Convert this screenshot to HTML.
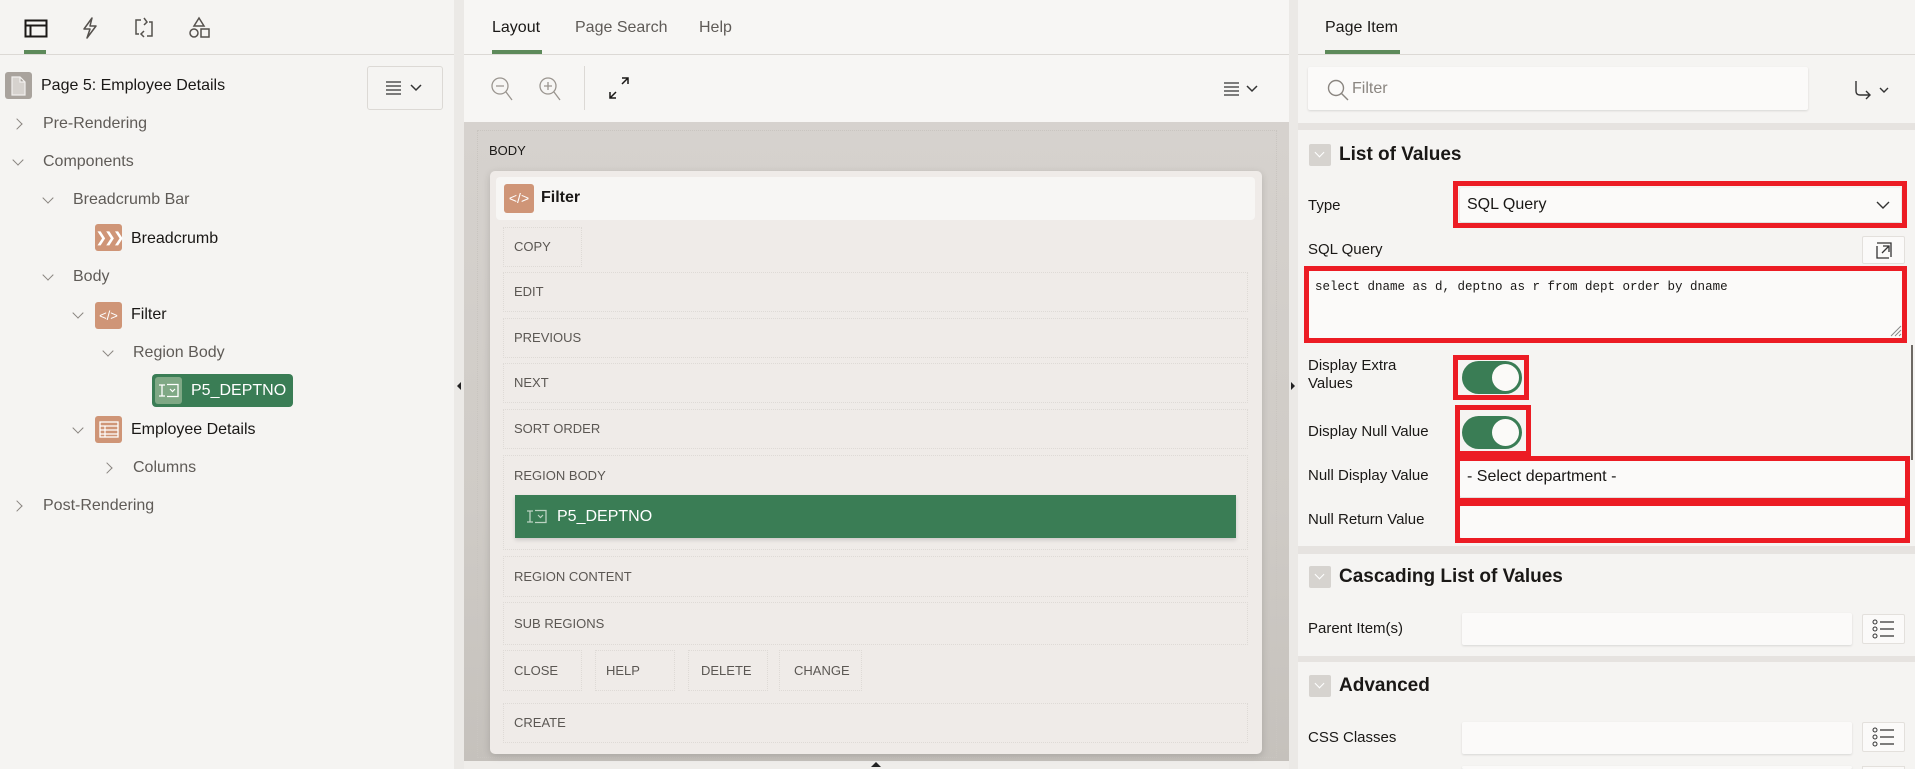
<!DOCTYPE html>
<html style="width:1915px;height:769px;overflow:hidden"><head><meta charset="utf-8"><style>
*{box-sizing:border-box;margin:0;padding:0}
body{width:1915px;height:769px;overflow:hidden;background:#ebe9e6;font-family:"Liberation Sans",sans-serif;position:relative;color:#1a1816}
.a{position:absolute}
.pane{position:absolute;top:0;height:769px;background:#f5f4f2}
.tabline{position:absolute;left:0;right:0;top:54px;height:1px;background:#dcd9d5}
.tree{position:absolute;font-size:16px;color:#5f5b57;white-space:nowrap;line-height:20px}
.dk{color:#1a1816}
.chev{position:absolute;width:8px;height:8px;border-right:1.5px solid #8a8580;border-bottom:1.5px solid #8a8580}
.cd{transform:rotate(45deg)}
.cr{transform:rotate(-45deg)}
.ico{position:absolute;width:27px;height:27px;background:#cf9577;border-radius:3px;color:#fff;font-size:13px;text-align:center;line-height:27px}
.row{position:absolute;left:503px;width:745px;border:1px dotted #dedad6;font-size:13px;color:#5b5753;padding-left:10px}
.lbl{position:absolute;left:1308px;font-size:15px;color:#1a1816;line-height:18px}
.red{position:absolute;border:5px solid #ec1c24}
.inp{position:absolute;background:#fbfaf9;border-radius:2px;box-shadow:0 1px 2px rgba(0,0,0,.12)}
.tog{position:absolute;width:60px;height:33px;border-radius:17px;background:#3a7d55}
.tog:after{content:"";position:absolute;right:3px;top:3px;width:27px;height:27px;border-radius:14px;background:#fbfaf8}
.hdr{position:absolute;left:1339px;font-size:19px;font-weight:bold;color:#1a1816}
.tb{position:absolute;left:1309px;width:22px;height:22px;background:#d6d3cf;border-radius:2px}
.tb:after{content:"";position:absolute;left:7px;top:5px;width:6px;height:6px;border-right:1.5px solid #fff;border-bottom:1.5px solid #fff;transform:rotate(45deg)}
.band{position:absolute;left:1298px;width:617px;background:#e6e3e0}
.btn{position:absolute;width:43px;height:30px;background:#fbfaf9;border:1px solid #e3e0dc;border-radius:2px}
</style></head><body>

<!-- LEFT PANE -->
<div class="pane" style="left:0;width:454px">
  <div class="tabline"></div>
  <div class="a" style="left:24px;top:50px;width:22px;height:4px;background:#5d8a5a"></div>
  <svg class="a" style="left:24px;top:18px" width="24" height="22" viewBox="0 0 24 22"><rect x="1.5" y="2.5" width="21" height="16" fill="none" stroke="#1a1816" stroke-width="2"/><line x1="1.5" y1="7.5" x2="22.5" y2="7.5" stroke="#1a1816" stroke-width="2"/><line x1="6.5" y1="7.5" x2="6.5" y2="18.5" stroke="#1a1816" stroke-width="2"/></svg>
  <svg class="a" style="left:80px;top:16px" width="20" height="24" viewBox="0 0 20 24"><path d="M12 2 L4 13 H10 L7 22 L16 10 H10 Z" fill="none" stroke="#55514d" stroke-width="1.5" stroke-linejoin="round"/></svg>
  <svg class="a" style="left:132px;top:17px" width="24" height="22" viewBox="0 0 24 22"><path d="M9 3 H4 V17 H7 M15 19 H20 V5 H17 M12 1 L15 5 L12 8 M12 14 L9 17 L12 20" fill="none" stroke="#55514d" stroke-width="1.5"/></svg>
  <svg class="a" style="left:187px;top:16px" width="24" height="24" viewBox="0 0 24 24"><path d="M12 2 L17 10 H7 Z" fill="none" stroke="#55514d" stroke-width="1.5"/><circle cx="7" cy="17" r="4" fill="none" stroke="#55514d" stroke-width="1.5"/><rect x="14" y="13" width="8" height="8" fill="none" stroke="#55514d" stroke-width="1.5"/></svg>

  <div class="a" style="left:5px;top:72px;width:27px;height:27px;background:#a9a39d;border-radius:3px"></div>
  <svg class="a" style="left:10px;top:76px" width="17" height="20" viewBox="0 0 17 20"><path d="M2 1 H10 L15 6 V19 H2 Z M10 1 V6 H15" fill="#d6d2ce" stroke="#f2f0ee" stroke-width="1.2"/></svg>
  <div class="tree dk" style="left:41px;top:76px">Page 5: Employee Details</div>
  <div class="a" style="left:367px;top:66px;width:76px;height:44px;border:1px solid #dcd9d5;border-radius:3px;background:#f5f4f2"></div>
  <svg class="a" style="left:385px;top:80px" width="40" height="16" viewBox="0 0 40 16"><path d="M1 2H16M1 6H16M1 10H16M1 14H16" stroke="#333" stroke-width="1.3"/><path d="M26 5 L31 10 L36 5" fill="none" stroke="#333" stroke-width="1.5"/></svg>

  <div class="chev cr" style="left:13px;top:120px"></div><div class="tree" style="left:43px;top:114px">Pre-Rendering</div>
  <div class="chev cd" style="left:14px;top:156px"></div><div class="tree" style="left:43px;top:152px">Components</div>
  <div class="chev cd" style="left:44px;top:194px"></div><div class="tree" style="left:73px;top:190px">Breadcrumb Bar</div>
  <div class="ico" style="left:95px;top:224px;font-size:14px;letter-spacing:-3px">❯❯❯</div><div class="tree dk" style="left:131px;top:229px">Breadcrumb</div>
  <div class="chev cd" style="left:44px;top:271px"></div><div class="tree" style="left:73px;top:267px">Body</div>
  <div class="chev cd" style="left:74px;top:309px"></div><div class="ico" style="left:95px;top:302px">&lt;/&gt;</div><div class="tree dk" style="left:131px;top:305px">Filter</div>
  <div class="chev cd" style="left:104px;top:347px"></div><div class="tree" style="left:133px;top:343px">Region Body</div>
  <div class="a" style="left:152px;top:374px;width:141px;height:33px;background:#3a7d55;border-radius:4px"></div>
  <div class="a" style="left:155px;top:377px;width:27px;height:27px;background:#7fa885;border-radius:3px"></div>
  <svg class="a" style="left:158px;top:383px" width="22" height="15" viewBox="0 0 22 15"><path d="M1 2H7M1 13H7M4 2V13M9 1.5H20V13.5H9" fill="none" stroke="#fff" stroke-width="1.3"/><path d="M12 6L14.5 8.5L17 6" fill="none" stroke="#fff" stroke-width="1.2"/></svg>
  <div class="tree" style="left:191px;top:381px;color:#fff">P5_DEPTNO</div>
  <div class="chev cd" style="left:74px;top:424px"></div>
  <div class="ico" style="left:95px;top:416px"></div>
  <svg class="a" style="left:99px;top:421px" width="20" height="17" viewBox="0 0 20 17"><rect x="1" y="1" width="18" height="15" fill="none" stroke="#fff" stroke-width="1.3"/><path d="M1 5H19M1 9H19M1 13H19M6 5V16" stroke="#fff" stroke-width="1.2"/></svg>
  <div class="tree dk" style="left:131px;top:420px">Employee Details</div>
  <div class="chev cr" style="left:103px;top:464px"></div><div class="tree" style="left:133px;top:458px">Columns</div>
  <div class="chev cr" style="left:13px;top:502px"></div><div class="tree" style="left:43px;top:496px">Post-Rendering</div>
</div>
<div class="a" style="left:457px;top:382px;width:0;height:0;border-top:4px solid transparent;border-bottom:4px solid transparent;border-right:4px solid #222"></div>

<!-- MIDDLE PANE -->
<div class="pane" style="left:464px;width:825px;background:#f7f6f4">
  <div class="tabline"></div>
  <div class="a" style="left:28px;top:19px;font-size:16px;color:#1a1816">Layout</div>
  <div class="a" style="left:111px;top:19px;font-size:16px;color:#5f5b57">Page Search</div>
  <div class="a" style="left:235px;top:19px;font-size:16px;color:#5f5b57">Help</div>
  <div class="a" style="left:28px;top:50px;width:50px;height:4px;background:#5d8a5a"></div>
  <svg class="a" style="left:26px;top:76px" width="24" height="26" viewBox="0 0 24 26"><circle cx="10" cy="10" r="8" fill="none" stroke="#9a958f" stroke-width="1.3"/><path d="M6 10H14M16 16L22 24" stroke="#9a958f" stroke-width="1.3"/></svg>
  <svg class="a" style="left:74px;top:76px" width="24" height="26" viewBox="0 0 24 26"><circle cx="10" cy="10" r="8" fill="none" stroke="#9a958f" stroke-width="1.3"/><path d="M6 10H14M10 6V14M16 16L22 24" stroke="#9a958f" stroke-width="1.3"/></svg>
  <div class="a" style="left:120px;top:66px;width:1px;height:44px;background:#dcd9d5"></div>
  <svg class="a" style="left:144px;top:76px" width="22" height="24" viewBox="0 0 22 24"><path d="M8 16L2 22M2 16V22H8M14 8L20 2M14 2H20V8" fill="none" stroke="#1a1816" stroke-width="1.5"/></svg>
  <svg class="a" style="left:759px;top:81px" width="40" height="16" viewBox="0 0 40 16"><path d="M1 2H16M1 6H16M1 10H16M1 14H16" stroke="#333" stroke-width="1.3"/><path d="M24 5 L29 10 L34 5" fill="none" stroke="#333" stroke-width="1.5"/></svg>
  <div class="a" style="left:0;top:122px;width:825px;height:639px;background:linear-gradient(#d6d2ce,#cfcbc6 60%,#c5c1bc)"></div>
  <div class="a" style="left:13px;top:130px;width:800px;height:628px;border:1px dotted #c9c5c0"></div>
  <div class="a" style="left:25px;top:143px;font-size:13px;color:#1a1816">BODY</div>
  <div class="a" style="left:0;top:761px;width:825px;height:8px;background:#efedea"></div>
</div>
<div class="a" style="left:871px;top:762px;width:0;height:0;border-left:5px solid transparent;border-right:5px solid transparent;border-bottom:5px solid #222"></div>
<div class="a" style="left:1291px;top:382px;width:0;height:0;border-top:4px solid transparent;border-bottom:4px solid transparent;border-left:4px solid #222"></div>

<div class="a" style="left:490px;top:171px;width:772px;height:583px;background:#efebe8;border-radius:5px;box-shadow:0 2px 8px rgba(0,0,0,.15)"></div>
<div class="a" style="left:496px;top:177px;width:759px;height:43px;background:#f7f6f4;border-radius:4px"></div>
<div class="ico" style="left:504px;top:184px;width:30px;height:29px;line-height:29px;font-size:14px">&lt;/&gt;</div>
<div class="a" style="left:541px;top:189px;font-size:16px;font-weight:bold">Filter</div>

<div class="row" style="top:227px;height:40px;width:79px;line-height:38px">COPY</div>
<div class="row" style="top:272px;height:40px;line-height:38px">EDIT</div>
<div class="row" style="top:318px;height:40px;line-height:38px">PREVIOUS</div>
<div class="row" style="top:363px;height:40px;line-height:38px">NEXT</div>
<div class="row" style="top:409px;height:40px;line-height:38px">SORT ORDER</div>
<div class="row" style="top:455px;height:95px;line-height:40px">REGION BODY</div>
<div class="a" style="left:515px;top:495px;width:721px;height:43px;background:#3a7d55;box-shadow:0 2px 4px rgba(0,0,0,.15)"></div>
<svg class="a" style="left:526px;top:509px" width="22" height="15" viewBox="0 0 22 15"><path d="M1 2H7M1 13H7M4 2V13M9 1.5H20V13.5H9" fill="none" stroke="#bcd3c2" stroke-width="1.3"/><path d="M12 6L14.5 8.5L17 6" fill="none" stroke="#bcd3c2" stroke-width="1.2"/></svg>
<div class="a" style="left:557px;top:508px;font-size:16px;color:#fff">P5_DEPTNO</div>
<div class="row" style="top:556px;height:41px;line-height:40px">REGION CONTENT</div>
<div class="row" style="top:602px;height:43px;line-height:42px">SUB REGIONS</div>
<div class="row" style="top:650px;height:41px;width:79px;line-height:40px">CLOSE</div>
<div class="row" style="top:650px;height:41px;left:595px;width:80px;line-height:40px">HELP</div>
<div class="row" style="top:650px;height:41px;left:688px;width:80px;line-height:40px;padding-left:12px">DELETE</div>
<div class="row" style="top:650px;height:41px;left:779px;width:83px;line-height:40px;padding-left:14px">CHANGE</div>
<div class="row" style="top:703px;height:40px;line-height:38px">CREATE</div>

<!-- RIGHT PANE -->
<div class="pane" style="left:1298px;width:617px">
  <div class="tabline"></div>
  <div class="a" style="left:27px;top:19px;font-size:16px;color:#1a1816">Page Item</div>
  <div class="a" style="left:27px;top:50px;width:75px;height:4px;background:#5d8a5a"></div>
  <div class="inp" style="left:10px;top:67px;width:500px;height:43px"></div>
  <svg class="a" style="left:29px;top:79px" width="22" height="22" viewBox="0 0 22 22"><circle cx="9" cy="9" r="7.5" fill="none" stroke="#8a8580" stroke-width="1.4"/><path d="M14.5 14.5L21 21" stroke="#8a8580" stroke-width="1.4"/></svg>
  <div class="a" style="left:54px;top:80px;font-size:16px;color:#8a8580">Filter</div>
  <svg class="a" style="left:556px;top:79px" width="40" height="22" viewBox="0 0 40 22"><path d="M2 2V12Q2 16 6 16H16M12 12L16 16L12 20" fill="none" stroke="#333" stroke-width="1.4"/><path d="M26 9L30 13L34 9" fill="none" stroke="#333" stroke-width="1.4"/></svg>
</div>
<div class="band" style="top:123px;height:7px"></div>
<div class="tb" style="top:144px"></div><div class="hdr" style="top:144px">List of Values</div>

<div class="lbl" style="top:197px">Type</div>
<div class="inp" style="left:1460px;top:188px;width:441px;height:34px"></div>
<div class="a" style="left:1467px;top:196px;font-size:16px">SQL Query</div>
<svg class="a" style="left:1876px;top:200px" width="14" height="10" viewBox="0 0 14 10"><path d="M1 2L7 8L13 2" fill="none" stroke="#333" stroke-width="1.4"/></svg>
<div class="red" style="left:1453px;top:181px;width:454px;height:47px"></div>

<div class="lbl" style="top:241px">SQL Query</div>
<div class="btn" style="left:1862px;top:236px;height:28px"></div>
<svg class="a" style="left:1874px;top:241px" width="20" height="20" viewBox="0 0 20 20"><path d="M3 5V17H15M3 2H17V16M8 12L15 5M9 5H15V11" fill="none" stroke="#333" stroke-width="1.3"/></svg>
<div class="inp" style="left:1309px;top:271px;width:593px;height:67px"></div>
<div class="a" style="left:1315px;top:280px;font-family:'Liberation Mono',monospace;font-size:12.5px;color:#1a1816">select dname as d, deptno as r from dept order by dname</div>
<svg class="a" style="left:1888px;top:323px" width="14" height="14" viewBox="0 0 14 14"><path d="M13 3L3 13M13 7L7 13M13 11L11 13" stroke="#888" stroke-width="1"/></svg>
<div class="red" style="left:1304px;top:266px;width:603px;height:77px"></div>

<div class="lbl" style="top:357px">Display Extra<br>Values</div>
<div class="tog" style="left:1462px;top:361px"></div>
<div class="red" style="left:1453px;top:355px;width:76px;height:45px"></div>

<div class="lbl" style="top:423px">Display Null Value</div>
<div class="tog" style="left:1462px;top:416px"></div>
<div class="red" style="left:1455px;top:405px;width:76px;height:51px"></div>

<div class="lbl" style="top:467px">Null Display Value</div>
<div class="inp" style="left:1460px;top:460px;width:445px;height:37px"></div>
<div class="a" style="left:1467px;top:468px;font-size:16px">- Select department -</div>
<div class="red" style="left:1455px;top:456px;width:455px;height:47px"></div>

<div class="lbl" style="top:511px">Null Return Value</div>
<div class="inp" style="left:1460px;top:506px;width:445px;height:32px"></div>
<div class="red" style="left:1455px;top:501px;width:455px;height:42px"></div>

<div class="band" style="top:546px;height:8px"></div>
<div class="tb" style="top:566px"></div><div class="hdr" style="top:566px">Cascading List of Values</div>
<div class="lbl" style="top:620px">Parent Item(s)</div>
<div class="inp" style="left:1462px;top:613px;width:390px;height:32px"></div>
<div class="btn" style="left:1862px;top:614px"></div>
<svg class="a" style="left:1872px;top:619px" width="24" height="20" viewBox="0 0 24 20"><circle cx="3" cy="3" r="2" fill="none" stroke="#333"/><circle cx="3" cy="10" r="2" fill="none" stroke="#333"/><circle cx="3" cy="17" r="2" fill="none" stroke="#333"/><path d="M8 3H22M8 10H22M8 17H22" stroke="#333" stroke-width="1.3"/></svg>

<div class="band" style="top:656px;height:6px"></div>
<div class="tb" style="top:675px"></div><div class="hdr" style="top:675px">Advanced</div>
<div class="lbl" style="top:729px">CSS Classes</div>
<div class="inp" style="left:1462px;top:722px;width:390px;height:32px"></div>
<div class="btn" style="left:1862px;top:722px"></div>
<svg class="a" style="left:1872px;top:727px" width="24" height="20" viewBox="0 0 24 20"><circle cx="3" cy="3" r="2" fill="none" stroke="#333"/><circle cx="3" cy="10" r="2" fill="none" stroke="#333"/><circle cx="3" cy="17" r="2" fill="none" stroke="#333"/><path d="M8 3H22M8 10H22M8 17H22" stroke="#333" stroke-width="1.3"/></svg>
<div class="inp" style="left:1462px;top:766px;width:390px;height:3px"></div>
<div class="a" style="left:1862px;top:766px;width:43px;height:3px;background:#fbfaf9;border:1px solid #e3e0dc;border-bottom:none"></div>
<div class="a" style="left:1911px;top:345px;width:2px;height:115px;background:#6d6964"></div>
</body></html>
